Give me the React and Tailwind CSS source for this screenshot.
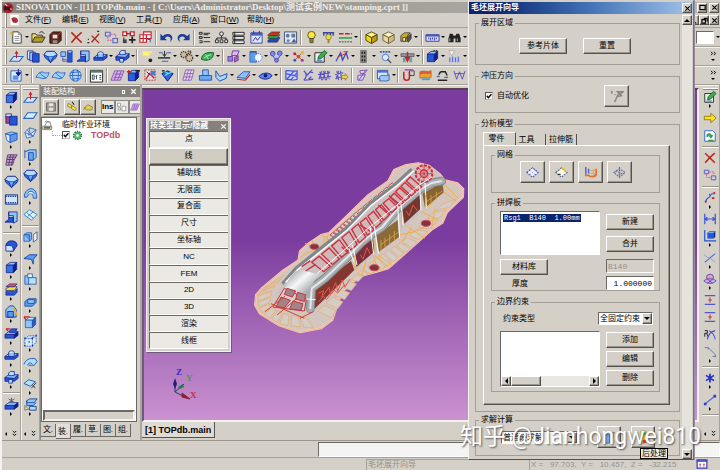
import React from "react";

const B = "#2456d6";
const L = "#8fc4fb";
const N = "#101c86";
const R = "#c8202c";
const K = "#222222";

const cube = (top, front, side, line) => (
  <g stroke={line} strokeWidth="0.8" strokeLinejoin="round">
    <path d="M2.5 5.5 6.5 2.5h7l-3.5 3z" fill={top} />
    <path d="M2.5 5.5H10v8H2.5z" fill={front} />
    <path d="M10 5.5l3.5-3v7.5L10 13.5z" fill={side} />
  </g>
);
const slab = (
  <g stroke={N} strokeWidth="0.7" strokeLinejoin="round">
    <path d="M1 9l4-3h10l-4 3z" fill={L} />
    <path d="M1 9h10v4H1z" fill={B} />
    <path d="M11 9l4-3v4l-4 3z" fill={N} />
  </g>
);
const mesh = (c) => <path d="M2 3c4-1 7 1 12 0v9c-4 2-8 0-12 0zM2 6l12 3M3 12l8-9M7 13l7-8" fill="#c8d0ff" stroke={c} strokeWidth="1.300" />;

const ART = {
  page: <g><path d="M4 2h6l3 3v9H4z" fill="#fff" stroke={K} strokeWidth=".9" /><path d="M10 2v3h3M6 7h5M6 9h5M6 11h5" stroke="#777" fill="none" strokeWidth=".8" /><path d="M3 1v5M.5 3.500h5M1.500 2l3 3" stroke="#d8b820" /></g>,
  folder: <g><path d="M1 13V4h4l1 1.500h6V8" fill="#f2dc6a" stroke={K} strokeWidth=".9" /><path d="M1 13l3-5.500h11L12 13z" fill="#b09a28" stroke={K} strokeWidth=".9" /><path d="M9 3c2-2 4-1 5 1" fill="none" stroke={K} /></g>,
  save: <g><path d="M2 5l3-3h9v9l-3 3H2z" fill="#5c2a1c" stroke="#1c0c08" strokeWidth=".9" /><path d="M5 5h5v4H5z" fill="#eadfd8" /><path d="M5 11h5v3H5z" fill="#9a8f88" /><path d="M11 5l3-3" stroke="#a0503c" /></g>,
  x: <path d="M2.500 2.500C6 6 10 10 13.500 13.500M13.500 2.500C9 6 6 9 2.500 13.500" stroke="#b3261c" strokeWidth="1.700" fill="none" />,
  xdot: <g><path d="M6 6l8 8M14 4L6 13" stroke="#b3261c" strokeWidth="1.500" /><path d="M1.500 13.500h2M2 10h1M12 1.500h2" stroke={K} strokeWidth="1.300" /></g>,
  boxes: <g fill="none" strokeWidth="1.100"><path d="M1.500 2.500h5v4h-5z" stroke="#5560c8" /><path d="M9.500 9h5v4.500h-5z" stroke="#5560c8" /><path d="M7 4.500h5.500V9M4 7v4h5" stroke="#d0508c" strokeDasharray="2 1" /></g>,
  group: <g><path d="M2 2h4v4H2zM10 2h4v4h-4z" fill="#fff" stroke={R} strokeWidth="1.400" /><path d="M6 4h4M3 8v5h3" stroke={K} fill="none" /><path d="M2 10h4v4H2z" fill="#444" /><path d="M12 7v7M8.500 10.500h7" stroke={K} strokeWidth="1.800" /></g>,
  group2: <g fill="#fff" stroke={R} strokeWidth="1.200"><path d="M6 2h8v7H6z" /><path d="M2 5h7v8H2z" /><path d="M2 9h7M5.500 5v8M9 5h5" /><path d="M10 10h3v3" stroke={B} /></g>,
  undo: <path d="M1.500 4v7h7L6.200 8.700C8 6 12.500 6.500 12.500 10c0 1-.5 2-1.500 3C16 11 15 4.500 9.500 4.300 7.500 4.200 5.500 5 4.200 6.600z" fill="#1c3a96" />,
  redo: <path d="M14.500 4v7h-7l2.300-2.300C8 6 3.500 6.500 3.500 10c0 1 .5 2 1.500 3C0 11 1 4.500 6.500 4.300c2-.1 4 .7 5.300 2.300z" fill="#1c3a96" />,
  tree: <path d="M2.500 2.500h3v2h-3zM2.500 7h3v2h-3zM2.500 11.500h3v2h-3M7 3.500h7M7 5h5M7 8h7M7 12.500h7" fill="none" stroke={K} strokeWidth="1" />,
  org: <g fill="#eee" stroke={K} strokeWidth="1"><path d="M8 6v3M3 11V8.500h10V11" fill="none" /><circle cx="8" cy="4" r="2" /><path d="M1.500 10.500h3v3h-3zM6.500 10.500h3v3h-3zM11.500 10.500h3v3h-3z" /></g>,
  list: <g><path d="M2 2.500h12v3H2zM2 7h12v3H2zM2 11.500h12v3H2z" fill="#eee" stroke={K} strokeWidth="1" /><path d="M4 2v12" stroke={K} /></g>,
  cal: <g><path d="M2 3h12v11H2z" fill="#dfe6ff" stroke="#3a48a0" /><path d="M2 3h12v3H2z" fill="#4a5cc0" /><path d="M4 12l3-4 2 3 3-4M5 1v3M11 1v3" stroke="#223080" fill="none" /></g>,
  layers: <g strokeWidth=".6" stroke="#333"><path d="M2 11l4-3h9l-3 5H2z" fill="#2444c0" /><path d="M2 8l4-3h9l-3 4H2z" fill="#28a040" /><path d="M2 5l4-3h9l-3 4H2z" fill="#c83020" /></g>,
  shapes: <g><path d="M1.500 2h13v12h-13z" fill="#dce8f4" stroke="#44506c" /><circle cx="5" cy="6" r="2" fill="#5878b8" /><path d="M9 4h4v4H9zM4 10h3v2.500H4z" fill="#68788c" /><path d="M12 9l-3 4h5z" fill="#3858a8" /></g>,
  bulb: <g><circle cx="8" cy="5.500" r="4" fill="#ffe83c" stroke="#5c5410" /><path d="M6.300 9h3.400v4.500H6.300z" fill="#8c8430" stroke="#333" strokeWidth=".7" /></g>,
  tag: <g><path d="M2 3h12M3 3v3M6.500 3v4M10 3v4M13 3v3" stroke="#3a48a0" strokeWidth="1.500" /><circle cx="8" cy="7.500" r="3" fill="#e8d84c" stroke="#77702a" strokeWidth=".7" /><path d="M7 10h2v4H7z" fill="#8c8430" /></g>,
  lines: <g strokeWidth="1.600"><path d="M1 4h14" stroke={R} strokeDasharray="5 1.500" /><path d="M1 8.500h14" stroke="#28a040" /><path d="M1 12.500h14" stroke="#777" strokeDasharray="2 1" /></g>,
  cubeY: <g stroke="#4c4400" strokeLinejoin="round"><path d="M8 2l6 3-6 3-6-3z" fill="#fff58c" /><path d="M2 5l6 3v6.500L2 11z" fill="#f0d820" /><path d="M14 5L8 8v6.500l6-3.500z" fill="#b89c10" /></g>,
  cubeW: <g stroke="#66582c" strokeLinejoin="round" strokeWidth=".9"><path d="M8 2l6 3-6 3-6-3z" fill="#fbf2cc" /><path d="M2 5l6 3v6.500L2 11z" fill="#e6d8a4" /><path d="M14 5L8 8v6.500l6-3.500z" fill="#cdbd86" /></g>,
  cubeG: <g stroke="#333" strokeWidth=".8"><path d="M3 6l4-3h6l-3 3v6H3z" fill="#c8ac28" /><path d="M9 8l5-4v5l-3 4z" fill="#555" /><path d="M5 8h3v4H5z" fill="#efe5a0" /></g>,
  ruler: <g><path d="M1 5h14v7H1z" fill="#dcdcff" stroke="#33409c" /><path d="M1 5h14v2H1z" fill="#4a58b8" /><path d="M4 8v2M6 8v3M8 8v2M10 8v3M12 8v2" stroke="#33409c" /></g>,
  binoc: <g fill={K}><path d="M3 4h3l1 3v6H1.500V9zM10 4h3l1.500 5v4H9V7z" /><path d="M6 6h4v3H6z" /><path d="M3 9v3M11 9v3" stroke="#bbb" /></g>,
  plane: <g><path d="M1 13l4-5h10l-4 5z" fill="#cfe6ff" stroke="#2c68c4" strokeWidth="1.200" /><path d="M8 10V3" stroke={R} strokeWidth="1.200" /><path d="M6 5h4L8 1.500z" fill={R} /></g>,
  sheet: <path d="M1 11l4-6h10l-4 6z" fill="#d8ecff" stroke="#2c68c4" strokeWidth="1.200" />,
  stack: <g stroke={N} strokeWidth=".8"><path d="M1.500 2h6v9h-6z" fill="#dce8ff" /><path d="M4 3.500h6v9H4z" fill={L} /><path d="M7 5h7v9H7z" fill={B} /></g>,
  gem: <g stroke={N} strokeWidth=".8" strokeLinejoin="round"><path d="M1 6l3-3.500h8L15 6l-1 3-6 5.500L2 9z" fill="#2f74e8" /><path d="M1 6l3-3.500h8L15 6l-4 2H5z" fill="#b4dcff" /><path d="M5 8l3 6.500L11 8" fill="#68a8f6" /></g>,
  cylset: <g stroke="#1c3ca8" strokeWidth=".8"><path d="M2 3h5v5H2z" fill={L} /><path d="M9 2h5v12H9z" fill={B} /><ellipse cx="11.500" cy="3" rx="2.500" ry="1.200" fill="#d0e8ff" /><path d="M4 9v4h5M4 11h4" fill="none" /></g>,
  bend: <g stroke={N} strokeWidth=".8"><path d="M5 2h9v10l-4 2V6H5z" fill={L} /><path d="M5 2v8l-4 3h9V8H5" fill={B} /></g>,
  cyl: <g stroke={N} strokeWidth=".8"><path d="M1 9l4-3h10l-4 4H1z" fill={L} /><path d="M1 9v3h10l4-3V6l-4 3.500z" fill={B} /><ellipse cx="8" cy="5" rx="3" ry="2" fill="#e0f0ff" /><path d="M5 5v4h6V5" fill={L} /></g>,
  cross: <g stroke={N} strokeWidth=".8"><path d="M1 8l4-3h10l-4 4H1z" fill={L} /><path d="M1 8v4h10l4-3V5l-4 4z" fill={B} /><path d="M5 3l2-1.500h4V6H5zM5 10h4v4H5z" fill="#b8dcff" /></g>,
  ydot: <g><path d="M2 2h12L8 9z" fill="#f2e68c" /><path d="M3 3h6v4H3z" fill="#fff46e" /><circle cx="11" cy="12" r="2" fill={K} /></g>,
  align: <g><path d="M1 9.500h13" stroke={K} strokeWidth="1.500" /><path d="M2 4h4M10 4h5M5 13h7" stroke="#5058b0" strokeWidth="1.200" /><path d="M8 2v5M6 5l2 3 2-3" stroke={K} fill="none" /></g>,
  gears: <g fill="#cdbb9c" stroke="#463e34" strokeDasharray="1.500 .8" strokeWidth="1.400"><circle cx="5" cy="6" r="3.200" /><circle cx="11" cy="9.500" r="3.600" /><circle cx="11" cy="3.500" r="1.500" /></g>,
  leaf: <g><path d="M1.500 11C2 5 7 3 14.500 4c0 6-5 10-13 7z" fill="#3fae5c" stroke="#12602a" /><path d="M4 10c3-3 5-3 8-4M6 6l3 5" stroke="#b5ecc0" fill="none" /></g>,
  purple: <g stroke="#5a3a9c" strokeWidth=".9"><path d="M7 2h7l-2 5H6z" fill="#e2b4ea" /><path d="M2 8h5v5H2z" fill="#9a7ae0" /><path d="M9 9l4-2v5l-4 2z" fill="#d6589c" /></g>,
  half: <g stroke="#2c5cb8" strokeWidth=".8"><path d="M2 3h7v11H2z" fill="#5c9cf0" /><path d="M2 3h7" stroke="#133" /><circle cx="11" cy="9" r="4" fill="#f4f8ff" strokeDasharray="1.500 1" /></g>,
  balls: <g fill="#8088e8" stroke="#3c3c9c" strokeWidth=".9"><circle cx="4" cy="5" r="2.500" /><circle cx="11.500" cy="4.500" r="2.500" /><path d="M4 7l4 6 4-6" fill="#b8c0ff" /><circle cx="8" cy="12" r="2" /></g>,
  sparks: <g><path d="M3 4l9 8M13 3L4 12" stroke="#9a6a50" /><g><circle cx="4" cy="5" r="1.600" fill={R} /><circle cx="12" cy="4" r="1.600" fill="#e8b020" /><circle cx="8" cy="8" r="2" fill="#d84820" /><circle cx="4" cy="12" r="1.500" fill="#3458c8" /><circle cx="12" cy="12" r="1.600" fill="#a038a8" /></g></g>,
  pencil: <g><path d="M2 4h10v10H2z" fill="#eef5ea" stroke={K} /><path d="M5 11l1-3.500 6-6 3 2.500-6.500 6.500z" fill="#38b04c" stroke="#12501e" strokeWidth=".8" /><path d="M4 12.500h6" stroke={B} /></g>,
  arcs: <g fill="none"><path d="M1 13L6 4l2 8 4-8 2 7" stroke="#3848c0" strokeWidth="1.300" /><path d="M9 3h5M3 8l9-3" stroke={R} /></g>,
  dots: <g><path d="M5 1.500h6v13H5z" fill="#8c8c8c" stroke="#555" strokeWidth=".6" /><path d="M6 3h1.500v2H6zM8.500 3H10v2H8.500zM6 7h1.500v2H6zM8.500 7H10v2H8.500zM6 11h1.500v2H6zM8.500 11H10v2H8.500z" fill={K} /></g>,
  fxy: <g><path d="M2 3h12" stroke="#4450a8" strokeWidth="2" strokeDasharray="2 1" /><circle cx="8" cy="9" r="3.500" fill="#dfeaff" stroke="#4c78c8" /><path d="M10 11l4 4" stroke="#555" strokeWidth="1.500" /></g>,
  press: <g><path d="M1 5h14v3H1z" fill="#8a96a8" stroke="#444" strokeWidth=".7" /><path d="M3 9h3v5H3zM10 9h3v5h-3z" fill="#68a4a0" /><path d="M8 3v8M6 9l2 4 2-4z" stroke={R} fill={R} strokeWidth="1.500" /></g>,
  bluecube: <g>{cube(L, B, N, N)}<path d="M9 1.500h5" stroke={K} strokeDasharray="1.500 1" /></g>,
  bars: <g><path d="M2 2h6l-3 5z" fill="#fff" stroke="#999" strokeWidth=".7" /><path d="M2 9h12v5H2z" fill="#b8c4f4" /><path d="M3 9v5M6 8v6M9 9v5M12 8v6" stroke="#5064c8" /></g>,
  importer: <g><path d="M2 3h11v11H2z" fill="#dceaff" stroke="#2c68c4" /><path d="M4 8h6v4.500H4z" fill="#5c94e0" /><path d="M10 1v5M7.500 5l2.500 3.500L12.500 5z" fill={N} stroke={N} /></g>,
  surf: <path d="M1 10C3 5 7 3 10 5c2 1 3 0 5 0-1 5-4 7-8 6-3-1-4-1-6-1zM5 5c1 2 3 3 7 6" fill="#9ccffc" stroke="#2c68c4" strokeWidth="1" />,
  globe: <g fill="none" stroke="#2c68c4"><ellipse cx="8" cy="8" rx="6" ry="6" fill="#b4d8fb" /><path d="M3 5l10-1M2 8h12M4 12l8-1M6 2c-2 4-1 8 0 12M10 2c2 4 1 8 0 12" /></g>,
  date: <g><path d="M1.500 2.500h13v12.500h-13z" fill="#fff" stroke={K} /><path d="M1.500 2.500h13v2.500h-13z" fill="#557a74" /><path d="M3.500 7.500v4.500h2v-4.500zM8 8v4M7 9l2-1M11 8h2M11 10h2M11 12h2" stroke="#3a4a4a" fill="none" /></g>,
  para: <path d="M1 13L5 3h10l-4 10zM4 10h8M5 6.500h8M8 3L4.500 13M12 3L8 13" fill="#d4b0ee" stroke="#8450b0" strokeWidth=".9" />,
  cubered: <g>{cube(L, "#2464e0", N, N)}<path d="M1 4h5M3 2v4" stroke={R} strokeWidth="1.400" /><path d="M10 3h5" stroke={K} strokeWidth="1.500" /></g>,
  redmix: <g><path d="M2 2h11v11H2z" fill="#e6dada" stroke="#9a4a4a" strokeDasharray="2 1" /><path d="M3 12L7 6l5 5" stroke={R} fill="none" strokeWidth="1.400" /><path d="M8 3h5v5H8z" fill="#5878c8" /><path d="M4 4l3 3" stroke={K} /></g>,
  diam: <g><path d="M2 6l6-3 6 3-6 8z" fill="#2c68e0" stroke={N} /><path d="M3 3l6 3M5 8l8-4" stroke="#5ce0e8" strokeWidth="1.300" /><path d="M2 3h3" stroke={K} strokeWidth="1.400" /></g>,
  net: <path d="M5 2h9l-3 11H2zM4 6h9M3 9.500h9M8 2L5 13M11 2L8 13" fill="#f2d4ee" stroke="#7a5cb4" strokeWidth=".9" />,
  ortho: <g stroke="#1c4cb0" strokeWidth=".9"><path d="M5 2h6v6H5z" fill={L} /><path d="M1.500 8h13v5h-13z" fill="#68a8f4" /></g>,
  wedge: <path d="M2 3l4 6 8-3-1 5-7 3-4-4z" fill="#a8d8fc" stroke="#2050b8" strokeWidth="1" />,
  wing: <g><path d="M1 10l7-6h7l-5 7z" fill="#8cc0fa" stroke="#2c58b8" /><path d="M1 12l9 1 5-6" fill="none" stroke={R} strokeWidth="1.200" /></g>,
  eye: <g><path d="M1 9c3-4 10-5 14-1-3 5-10 5-14 1z" fill="#5c8cf0" stroke={N} /><circle cx="8" cy="8" r="2" fill={N} /></g>,
  mesh1: mesh("#4858d8"),
  hook: <path d="M3 3c4 3 3 7 0 10M3 13l10-1M6 8l6-6M9 4l4 1M8 12l3-3" stroke="#5450c8" strokeWidth="1.400" fill="none" />,
  hash: <path d="M3 4l2 9M7 3l2 10M11 3l2 9M1 7l13-2M2 11l13-2M5 3L2 12M9 3l-3 10M13 3l-3 10" stroke="#5450c8" strokeWidth="1.100" fill="none" />,
  hasharrow: <g><path d="M3 3l2 10M7 3l1 10M1 7l9-2M2 11l8-2M5 3L2 12" stroke="#5450c8" strokeWidth="1.100" fill="none" /><path d="M8 8h4V6l3 3.500L12 13v-2H8z" fill="#f0d44c" stroke="#7a6a10" strokeWidth=".7" /></g>,
  folds: <path d="M5 3c4-1 5 0 8-1l-3 4H6zM3 8c3-1 5 0 8-1l-3 6H3zM4 13l7-10" fill="#dcccf6" stroke="#7450b4" strokeWidth="1" />,
  wins: <g><path d="M1.500 2.500h11v9h-11z" fill="#dce6ff" stroke="#3050a0" /><path d="M1.500 2.500h11v2.500h-11z" fill="#4c74d0" /><path d="M4 9c3-3 6 1 10-2v6c-4 2-7 0-10 1z" fill="#9cc8f8" stroke="#2050a0" strokeWidth=".8" /></g>,
  magnet: <g fill="none" strokeWidth="1.600"><path d="M3 4v6c0 4 6 4 6 0V4" stroke={R} /><path d="M9 3h5v5H9z" stroke="#444" strokeWidth="1" /><path d="M4 2h9" stroke="#a050b0" /></g>,
  flag: <g><path d="M2 4c4-2 8 1 12-1v7c-4 2-8-1-12 1z" fill="#f0a030" stroke="#a86418" strokeWidth=".7" /><path d="M2 4c4-2 8 1 12-1v3c-4 1-8-1-12 1z" fill="#e0583c" /><path d="M4 12h9" stroke="#4ca0d0" strokeWidth="2" /></g>,
  robot: <g fill="none" stroke={K} strokeWidth="1.500"><path d="M3 13h10M6 4h5l2 4M6 4L4 7" /><path d="M2 9h3M10 10h4" stroke="#3c68c0" /></g>,
  vee: <path d="M2 3l3 9 3-8 3 8 3-9M3 6h10" stroke="#6450b8" fill="none" />,
  cubeB: cube(L, "#3472e8", N, N),
  docs: <g stroke={N} strokeWidth=".8"><path d="M2 2h6v4H2z" fill="#e8e0f0" /><path d="M2 5h5v7H2z" fill="#a04880" /><path d="M6 4.500h8V14H6z" fill={B} /></g>,
  cubeL: <g stroke="#2050a8" strokeWidth=".8"><path d="M1.500 4l5 1.500v8L3 11z" fill="#dcecff" /><path d="M1.500 4L8 2l6 1.500-7.500 2z" fill={L} /><path d="M6.500 5.500l7.500-2v7l-7.500 3z" fill="#5c98f0" /></g>,
  hatch: <path d="M4 3h10l-3 5H3zM3 8h8l-2 6H2zM7 3L5 14M10 3L8 14M4 5.500h9M3 11h7" fill="#c8a8cc" stroke="#5c3c78" strokeWidth="1" />,
  film: <g><path d="M1.500 3h13v10h-13z" fill="#cfe4ff" stroke="#1c3c80" /><path d="M1.500 4.500h13M1.500 11.500h13" stroke="#1c3c80" strokeWidth="1.600" strokeDasharray="1.500 1" /></g>,
  round: <g stroke={N} strokeWidth=".8"><path d="M2 8c0-3 3-5 6-5 4 0 6 2 6 5l-4 6H6z" fill={B} /><path d="M2 8h4c3 0 4 2 4 6H2z" fill="#cfe4ff" /></g>,
  sandwich: <g stroke={N} strokeWidth=".7"><path d="M2 10h9l3-3v4l-3 3H2z" fill={B} /><path d="M2 7l4-2h8l-3 4H2z" fill="#f4e040" /><path d="M2 5l4-3h8l-3 3z" fill="#e05858" /></g>,
  chamf: <g stroke={N} strokeWidth=".8"><path d="M2 6l4-4h4l3 4v8H2z" fill={L} /><path d="M4 8h6v6H4z" fill="#5c98ec" /><path d="M10 4l4 8" stroke="#d8b830" strokeWidth="2" /></g>,
  slabR: <g>{slab}<path d="M2 3h5M2 3l3 3" stroke={R} strokeWidth="1.300" /><path d="M6 5l2-2h6l-2 4H6z" fill={B} stroke={N} strokeWidth=".7" /></g>,
  slabX: <g>{slab}<path d="M5 2l6 4M11 2L5 6M8 1v5" stroke="#555" /></g>,
  fan: <path d="M2 8l5-5 7 2-3 7-7 2zM7 3l-1 8 8-6M2 8l9 4M4 5l7 7" fill="#dcecff" stroke="#2c68c4" strokeWidth=".9" />,
  door: <g stroke="#1c4ca0" strokeWidth=".9"><path d="M2 3v9M2 5l5-2h7v8l-3 3H6V6" fill={L} /><path d="M6 6h5v8H6z" fill="#68a4f0" /></g>,
  arch: <g stroke="#1c4cb0" strokeWidth=".9"><path d="M1.500 12C1 6 6 2 10 3c3 1 5 5 4.500 10H11c0-5-3-6-5-4L4 12z" fill="#8cc4fb" /><path d="M5 8c1-3 5-3 7 0" fill="#e4f2ff" /></g>,
  diamondL: <path d="M1 8l6-5 8 5-6 6zM4 6l7 6M5 10l6-5" fill="#e2f2ff" stroke="#2c80c4" />,
  mirror: <g stroke="#1c4ca0" strokeWidth=".8"><path d="M1 6l3-2h5v7l-2 2H1z" fill={L} /><path d="M1 6h6v7" fill="#5c98ec" /><path d="M11 6l4-3v8l-4 3z" fill="#eee" /></g>,
  blade: <path d="M1 8l6-4h8l-4 5v5l-2-5z" fill="#5c9cf0" stroke="#1c4ca0" />,
  cup: <g stroke="#1c4ca0" strokeWidth=".8"><path d="M2 4h5v9H2z" fill={L} /><path d="M6 6h8v7H6z" fill="#b8e0ff" /><path d="M5 2h5v4H5z" fill="#e8f4ff" /></g>,
  disc: <g stroke="#1c4ca0" strokeWidth=".9"><path d="M2 8l4-3h8v4l-4 4H2z" fill="#5c9cf0" /><path d="M5 6h7v4H5z" fill={L} /></g>,
  pull: <g>{cube("#cfe8ff", L, B, "#2050a8")}<path d="M1 2h6M1 2l2 3" stroke={R} strokeWidth="1.300" fill="none" /></g>,
  net2: <g><path d="M2 6l4-3h8v7l-4 4H2zM2 6h8l4-3M10 6v8" fill="#d8ecff" stroke="#2c68c4" strokeDasharray="2 1" /><path d="M1.500 5.500h1M9.500 5.500h1M13.500 2.500h1M1.500 13.500h1M9.500 13.500h1M6 9.500h1" stroke={N} strokeWidth="2" /></g>,
  hood: <path d="M1 11c2-5 6-7 12-6l2 3-3 4H6M5 12c0-3 4-3 5-1" fill="#b4dcfb" stroke="#1c5cb4" />,
  trim: <g><path d="M1 8l5-4 7 2-5 5z" fill="#b4e0fb" stroke="#1c5cb4" /><path d="M9 13l5-6M13 13l-3-4" stroke="#333" /></g>,
  paint: <g><path d="M4 4l3-2h8l-3 4H4zM4 4v5h7l3-3" fill={L} stroke="#1c4ca0" /><path d="M2 9l4 4-4 1z" fill="#f5efc0" stroke="#555" strokeWidth=".8" /><path d="M7 10h7v4H7z" fill="#b4dcfb" stroke="#1c4ca0" /></g>,
  arrow: <path d="M1.500 6H9V2.500L15 8l-6 5.500V10H1.500z" fill="#ffe21c" stroke="#8a7a10" />,
  refresh: <g><path d="M2 2h9l3 3v9H2z" fill="#fff" stroke={B} /><path d="M4 9V7c1-3 5-3 6 0h2l-3 4-3-4h2C7 6 6 7 6 9z" fill="#2c9c4c" /><path d="M6 13h6" stroke="#2c9c4c" strokeWidth="1.500" /></g>,
  curve: <g fill="none" stroke="#4458d0" strokeWidth="1.400"><path d="M3 13C4 6 7 9 8 6s2-3 5-3" /><path d="M2 12h2M12 2h2M10 8h3M7 4h1" stroke={R} strokeWidth="2" /></g>,
  width: <path d="M2 2v12M14 2v12M3 8h10M5 6L3 8l2 2M11 6l2 2-2 2" stroke="#3c54d8" strokeWidth="1.400" fill="none" />,
  corner: <g><path d="M2 1v12.500h13" stroke={B} strokeWidth="1.400" fill="none" /><path d="M5 5l2-2h7l-2 2z" fill={L} stroke={N} strokeWidth=".7" /><path d="M5 5h7v6H5z" fill={B} /><path d="M12 5l2-2v6l-2 2z" fill={N} /></g>,
  split: <g fill="none"><path d="M2 13L14 3" stroke="#4c68d0" strokeWidth="1.200" /><path d="M1 4l4 3 3 1 6 5" stroke="#88a0d8" /></g>,
  roll: <g fill="none" stroke="#6444a4"><ellipse cx="8" cy="6" rx="4" ry="3.500" fill="#e0a0c0" /><path d="M1 10c4-3 10-3 14 0-4 4-10 4-14 0zM5 8l6 5M11 8l-6 5" fill="#c0b0f0" /></g>,
  par: <g><path d="M2 3h12M2 13h12" stroke="#4c5cd0" strokeWidth="1.200" /><path d="M8 5v6M6 8h4" stroke={R} /></g>,
  rad: <g fill="none"><path d="M2 3h3v3H2v4M4 6l2 4" stroke={K} strokeWidth="1.100" /><path d="M5 13C6 7 9 4 14 3M7 3c4 2 6 5 7 10" stroke="#3c54d8" strokeWidth="1.200" /></g>,
  chline: <path d="M2 3h4l8 8v3M6 3v2M11 13h4" stroke="#5c6cb8" fill="none" />,
  star: <path d="M8 3v10M3.500 5l9 6M12.500 5l-9 6" stroke="#2430c8" strokeWidth="2" />,
  seg: <g><path d="M3 12L13 4" stroke="#5c70d8" strokeWidth="1.500" /><path d="M1 11h3v3H1zM12 2h3v3h-3z" fill="#2c3cc8" /></g>,
  quad: <g fill="none" stroke="#4c62c8" strokeWidth="1.300"><path d="M2 8l6-5 6 5-6 5z" fill="#f8f8ff" strokeDasharray="2 1" /><path d="M5 5.500l6 5M11 5.500l-6 5" strokeDasharray="1 2" strokeWidth="1" /></g>,
  quadY: <g fill="none" stroke="#5c6494" strokeWidth="1.200"><path d="M2 8l6-5 6 5-6 5z" fill="#fafae8" strokeDasharray="2 1" /><path d="M9 3l4 4" stroke="#e8c020" strokeWidth="2" /><path d="M4 10h3" stroke={K} /></g>,
  tub: <g fill="none" strokeWidth="1.500"><path d="M3 2v8M6 4v5" stroke="#4464d0" /><path d="M2 11h4c1 2 7 2 8-1V4" stroke="#e07030" strokeWidth="2" /><path d="M8 6h6M8 9h6M11 4v8" stroke="#e8a050" strokeWidth="1" /></g>,
  quadZ: <g fill="none" stroke="#5c6aac" strokeWidth="1.200"><path d="M2 8l6-4 6 4-6 5zM8 2v12M4 6l8 4" strokeDasharray="2 1" /><path d="M8 8v5" stroke="#a08040" strokeWidth="1.500" /></g>,
  wand: <g stroke="#8a867e" fill="none" strokeWidth="1.500"><path d="M6 14l4-9M9 8l5-1M9 3h6l-3 3z" fill="#aaa69e" /><path d="M2 3h2M3 2v3M6 6h1" /></g>,
  solve: <g><path d="M2 5h6v9H2z" fill="#7ca8e8" stroke="#4070b0" /><path d="M10 3h4M12 2v6" stroke="#777" /></g>,
  lights: <g><path d="M5 1h6v13H5z" fill="#e8e480" stroke="#8a8650" strokeWidth=".6" /><circle cx="9" cy="4" r="2" fill="#38b848" /><circle cx="8" cy="8" r="2" fill="#e8c828" /><circle cx="9" cy="12" r="2" fill="#d83828" /></g>,
  disk: <g><path d="M2 2.500h12v11H2z" fill="#99958d" stroke="#66625c" /><path d="M5 3h6v4H5zM5 9h6v4H5z" fill="#e8e5df" /></g>,
  link: <g stroke="#6c6218" strokeWidth=".8" fill="#f0e040"><path d="M3 3l5 3-1 3-5-2z" /><path d="M8 6l6 4-2 3-5-3z" /><path d="M8 1l3 4" stroke={K} strokeWidth="1.500" /></g>,
  link2: <g stroke="#6c6218" strokeWidth=".8" fill="#e8d038"><path d="M3 9l5-4 6 3-1 4H6z" /><path d="M2 12l3-4" /></g>,
  outl: <g fill="#fff" stroke="#888"><path d="M2 3h4v4H2zM8 7h5v6H8zM3 9h3v3H3z" /></g>,
  cog: <g><circle cx="8" cy="8" r="5" fill="#5cb878" stroke="#2c7c44" strokeWidth="3.500" strokeDasharray="1.900 1.240" /><circle cx="8" cy="8" r="4.500" fill="#5cb878" /><circle cx="8" cy="8" r="2" fill="#fff" /></g>,
  home: <g stroke="#555" strokeWidth=".9"><path d="M1 9h13v5H1z" fill="#dcd8a0" /><path d="M4 9l3-6h5l1 6z" fill="#fff" /><path d="M4 3l3-1.500 4 1.500" fill="none" /><path d="M3 11.500h9" stroke={K} strokeWidth="1.500" /></g>,
  app: <g><circle cx="8" cy="8" r="7" fill="#a8242c" /><path d="M3 5l5 2 5-3-3 5 2 4-5-3-4 2z" fill="#331418" /><path d="M4 3l3 2M11 9l2 1" stroke="#f0c8c8" strokeWidth="1.500" /></g>,
  doc: <g><path d="M2 1h11v14H2z" fill="#fff" /><path d="M3 6c3-3 8-2 9 2s-4 5-7 3z" fill="#b83040" /><path d="M4 7l5 3" stroke="#334" /></g>,
  table: <g><path d="M1.500 2.500h13v11h-13z" fill="#fff" stroke="#2c3cc0" strokeWidth="1.600" /><path d="M1 4h14" stroke="#2c3cc0" strokeWidth="2" /><path d="M4 9h3M9 9h3M5.500 7v5M10.500 7v5" stroke="#c83c78" /></g>,
};

function Icon({ n, className = "size-[15px]" }) {
  return (
    <svg viewBox="0 0 16 16" className={className + " shrink-0"} aria-hidden="true">
      {ART[n]}
    </svg>
  );
}

const raised = "border border-t-white border-l-white border-r-[#55524d] border-b-[#55524d] bg-[#d4d0c8] shadow-[inset_-1px_-1px_0_#9a968e]";
const sunken = "border border-t-[#6c6964] border-l-[#6c6964] border-r-white border-b-white";

/* A trailing ">" marks a tool with a drop-down; "|" is a divider. */
const ROW1 = "page> folder save | x xdot boxes group group2 | undo redo | tree org list cal layers shapes | bulb tag lines> | cubeY cubeW cubeG> | ruler> binoc>".split(" ");
const ROW2 = "plane stack gem cylset bend cyl> cross> | ydot align> gears> leaf> | purple> half> balls> sparks> pencil> arcs> dots> fxy> press> | bluecube> bars>".split(" ");
const ROW3 = "importer> | surf surf globe | date | para cubered redmix diam | net ortho wedge> wing> eye> | mesh1 hook hash hasharrow | folds | wins> | magnet flag robot vee".split(" ");
const COL1 = "cubeB> docs cubeL> hatch> gem film bend> | round> cubeB> sandwich> chamf> slabR> cyl> cross> | slabX>".split(" ");
const COL2 = "plane sheet fan> door> gem arch> diamondL | mirror> blade> cup> disc> pull net2> hood> trim> paint>".split(" ");
const COL3 = "pencil> arrow refresh | x boxes | curve> width corner> split> roll> par par rad chline> | star> seg> |".split(" ");

function Grip() {
  return <span className="h-[15px] w-[2px] shrink-0 border-l border-white bg-[#8c8982]" />;
}

function ToolRow({ items, children }) {
  return (
    <div className="flex h-[19px] items-center justify-between border-b border-[#a5a199] shadow-[0_1px_0_#f4f2ee]">
      <div className="flex w-[465px] items-center gap-[2px] pl-[3px]">
        <Grip />
        <div className="flex flex-1 items-center justify-between">
          {items.map((t, i) =>
            t === "|" ? (
              <span key={i} className="h-[15px] w-[2px] border-r border-white bg-[#9a968e]" />
            ) : (
              <button key={i} type="button" aria-label={t.replace(">", "")} className="flex items-center">
                <Icon n={t.replace(">", "")} />
                {t.endsWith(">") && <span className="ml-px border-x-2 border-t-2 border-x-transparent border-t-black" />}
              </button>
            )
          )}
        </div>
      </div>
      {children}
    </div>
  );
}

function ToolColumn({ items }) {
  return (
    <div className="flex w-[19px] shrink-0 flex-col items-center border-r border-[#a5a199] shadow-[1px_0_0_#f4f2ee]">
      <span className="mt-[3px] h-[2px] w-[15px] border-t border-white bg-[#8c8982]" />
      <div className="flex h-[326px] flex-col items-center justify-between">
        {items.map((t, i) =>
          t === "|" ? (
            <span key={i} className="h-[2px] w-[17px] border-b border-white bg-[#9a968e]" />
          ) : (
            <button key={i} type="button" aria-label={t.replace(">", "")} className="flex flex-col items-center">
              <Icon n={t.replace(">", "")} className={items === COL3 ? "size-[14px]" : "size-[15px]"} />
              {t.endsWith(">") && <span className="border-y-2 border-l-2 border-y-transparent border-l-black" />}
            </button>
          )
        )}
      </div>
      <div className="mt-auto mb-[3px] flex items-center gap-[5px]">
        <span className="border-y-2 border-r-2 border-y-transparent border-r-black" />
        <svg viewBox="0 0 6 8" className="h-[7px] w-[5px]" aria-hidden="true">
          <path d="M1 1l2 2 2-2M1 4.500l2 2 2-2" fill="none" stroke="#000" strokeWidth="1.200" />
        </svg>
      </div>
    </div>
  );
}

function Overflow() {
  return (
    <div className="flex w-[14px] flex-col items-center gap-[3px]">
      <svg viewBox="0 0 8 6" className="h-[5px] w-[7px]" aria-hidden="true">
        <path d="M1 1l2 2-2 2M4.500 1l2 2-2 2" fill="none" stroke="#000" strokeWidth="1.200" />
      </svg>
      <span className="border-x-2 border-t-2 border-x-transparent border-t-black" />
    </div>
  );
}

function Btn({ children, className = "" }) {
  return (
    <button type="button" className={`${raised} flex h-[16px] w-[48px] items-center justify-center text-[8px] ${className}`}>
      {children}
    </button>
  );
}

function Glyph({ d, label }) {
  return (
    <button type="button" aria-label={label} className={`${raised} flex size-[10px] items-center justify-center`}>
      <svg viewBox="0 0 8 8" className="size-[7px]" aria-hidden="true">
        <path d={d} fill="none" stroke="#000" strokeWidth="1.300" />
      </svg>
    </button>
  );
}

function Group({ title, className = "", children }) {
  return (
    <fieldset className={`min-w-0 border border-[#a39f97] ${className}`}>
      <legend className="ml-[3px] px-[2px] text-[8px] leading-[10px]">{title}</legend>
      {children}
    </fieldset>
  );
}

function Drop({ label, options, className }) {
  return (
    <div className={`${sunken} flex h-[13px] bg-white ${className}`}>
      <select aria-label={label} className="min-w-0 flex-1 appearance-none bg-transparent pl-px text-[8px] leading-[11px] outline-none">
        {options.map((o) => (
          <option key={o}>{o}</option>
        ))}
      </select>
      <span className={`${raised} pointer-events-none flex w-[10px] items-center justify-center`}>
        <span className="border-x-[3px] border-t-[3px] border-x-transparent border-t-black" />
      </span>
    </div>
  );
}

const lerp = (a, b, t) => [a[0] + (b[0] - a[0]) * t, a[1] + (b[1] - a[1]) * t];
const quad = (a, b, c, d) => `M${a}L${b}L${c}L${d}Z`;

/* Cells between two polylines that run side by side. */
function cells(p, q, n) {
  const at = (line, t) => {
    const s = t * (line.length - 1);
    const i = Math.min(Math.floor(s), line.length - 2);
    return lerp(line[i], line[i + 1], s - i);
  };
  return Array.from({ length: n }, (_, i) => [at(p, i / n), at(p, (i + 0.75) / n), at(q, (i + 0.75) / n), at(q, i / n)]);
}

const FLANGE = "M447 45L480 31 520 25 552 32 585 58 600 76 638 85 655 102 654 126 606 172 592 204 560 224 498 280 430 340 395 350 345 364 290 412 272 465 262 495 228 520 165 532 100 510 45 476 30 450 33 420 52 398 115 346 160 316 165 288 192 264 228 240 252 234 300 188 370 120 430 78Z";

function Model() {
  const redTop = cells([[200, 322], [330, 215], [430, 132], [500, 62]], [[236, 350], [352, 256], [456, 158], [535, 92]], 13);
  const backFlange = cells([[255, 240], [330, 175], [446, 80]], [[275, 250], [345, 190], [458, 96]], 15);
  const frontFlange = cells([[218, 468], [330, 362], [400, 305], [480, 255], [600, 140]], [[258, 488], [350, 366], [425, 335], [510, 270], [640, 125]], 18);
  const noseFlange = cells([[118, 360], [80, 405], [72, 455], [120, 478], [190, 490]], [[60, 395], [36, 420], [45, 470], [110, 510], [215, 520]], 11);
  const rib = "M196 462L200 400 240 370 318 296 350 262 385 234 412 216 458 160 524 104 560 84 590 78";
  return (
    <svg viewBox="0 0 675 555" className="absolute top-[65px] left-[101px] h-[185px] w-[225px]" aria-label="冲压件模型" role="img">
      <defs>
        <linearGradient id="hood" x1="0" y1="0" x2="1" y2="1">
          <stop offset="0" stopColor="#858a8c" />
          <stop offset=".4" stopColor="#f6f8f8" />
          <stop offset=".7" stopColor="#a4a8aa" />
          <stop offset="1" stopColor="#c9cdcd" />
        </linearGradient>
      </defs>
      <path d={FLANGE} fill="#d5c5bf" stroke="#f6cfc8" strokeWidth="6" strokeLinejoin="round" />
      <path d={FLANGE} fill="none" stroke="#eda763" strokeWidth="2" />
      <g fill="#d3cdc6" stroke="#e8aa66" strokeWidth="2">
        {[...frontFlange, ...noseFlange].map((c, i) => <path key={i} d={quad(...c)} />)}
      </g>
      <g fill="#dccfca" stroke="#c8504e" strokeWidth="3">
        {backFlange.map((c, i) => <path key={i} d={quad(...c)} />)}
      </g>
      <g fill="none" stroke="#f0b04c" strokeWidth="3">
        <path d="M165 310C190 280 220 300 240 250M180 265l60 30M200 255l20 45M230 240l40 25M250 235l-10 50" />
        <path d="M330 345l50-50 50 40M350 360l20-60M400 345l-20-55M440 330l-40-30M460 240l50-10 40-20M470 260l30-40M480 210l60 40M520 165l60 30M545 160l50-50 40 30M560 220l10-60M600 90l40 40" />
      </g>
      <path d="M86 450L110 388 150 340 210 290 300 222 370 150 450 90 500 42 540 28 575 50 598 80 596 116 540 160 478 212 455 250 395 296 335 338 290 385 205 470 178 468Z" fill="#c8c2c2" />
      <path d="M112 386L152 340 214 290 300 222 318 206 372 148 450 88 500 42" fill="none" stroke="#80868a" strokeWidth="9" />
      <path d="M122 382L160 342 222 294 306 226 378 152 456 92 506 48" fill="none" stroke="#fff" strokeWidth="4" />
      <path d="M208 402L318 318 328 345 208 462Z" fill="#85372f" />
      <path d="M328 292L384 246 388 290 334 336Z" fill="#792f3c" />
      <path d="M394 242L458 195 462 246 402 290Z" fill="#8b6a37" />
      <path d="M472 160L524 112 526 162 478 206Z" fill="#74362f" />
      <path d="M532 116L592 82 596 112 540 158Z" fill="#866330" />
      <path d={rib} fill="none" stroke="#81888a" strokeWidth="26" strokeLinejoin="round" strokeLinecap="round" />
      <path d={rib} fill="none" stroke="#a9aeb0" strokeWidth="20" strokeLinejoin="round" strokeLinecap="round" />
      <path d={rib} fill="none" stroke="#e4e7e7" strokeWidth="6" strokeLinejoin="round" />
      <g stroke="#e2574a" strokeWidth="3" fill="none">
        <path d="M220 415l16-8-6 20 22-30 4 20 16-34 6 26 14-34 8 22 14-24M220 440l16-16 8 10 24-28 10 8 22-26M346 300l8 12 12-34 10 20M484 168l8 14 12-32 14 18" />
      </g>
      <g stroke="#d29a44" strokeWidth="3" fill="none">
        <path d="M408 256v30M420 248v30M434 238v30M448 228v28M406 270l54-38M544 130v24M558 120v28M574 110v22M544 140l48-32" />
      </g>
      <path d="M124 392C132 366 146 346 168 344L226 360C210 372 196 392 194 420L184 436 120 398Z" fill="url(#hood)" />
      <path d="M118 400L184 432 178 468 84 456Z" fill="#d8cccc" stroke="#c8323c" strokeWidth="3" />
      <path d="M126 400l26 8-10 18-24-8zM158 412l24 8-4 20-26-8zM108 426l28 10-18 22-24-4zM144 438l30 8-6 20-34-4z" fill="#a08488" stroke="#c8323c" strokeWidth="3" />
      <path d="M60 470l60-46M96 480l60-50M78 446l100 44M205 470l-40 20" stroke="#d4442c" strokeWidth="3" />
      <g fill="#d0b8b8" stroke="#d02c3c" strokeWidth="4">
        {redTop.map((c, i) => <path key={i} d={quad(...c)} />)}
      </g>
      <path d="M170 335l26-18M182 348l30-20M290 275l20 20M345 210l36 22M400 150l30 28M432 122l30 24" stroke="#d02c3c" strokeWidth="4" fill="none" />
      <circle cx="537" cy="56" r="25" fill="#d8b4b4" stroke="#d02c3c" strokeWidth="6" strokeDasharray="9 4" />
      <circle cx="537" cy="56" r="11" fill="none" stroke="#d02c3c" strokeWidth="4" />
      <path d="M512 56h50M537 31v50M520 38l34 36M554 38l-34 36" stroke="#d02c3c" strokeWidth="2" />
      <g stroke="#fff" strokeWidth="3" fill="none">
        <path d="M216 356L306 278 372 218 456 150 520 92 560 66M312 280l18 50M322 270l14 60M376 218l10 80M388 212l12 84M458 150l6 100M468 146l6 66M524 94l4 72M540 84l4 76M184 432l28 2" />
      </g>
      <path d="M330 340v-40M390 294v-40M470 214v-46M542 160v-40" stroke="#f1ae40" strokeWidth="3" />
      <g fill="#8c3040" stroke="#c05060" strokeWidth="3">
        <ellipse cx="208" cy="275" rx="13" ry="8" />
        <ellipse cx="388" cy="338" rx="14" ry="9" />
        <ellipse cx="543" cy="205" rx="14" ry="9" />
      </g>
    </svg>
  );
}

const TYPES = ["点", "线", "辅助线", "无限面", "复合面", "尺寸", "坐标轴", "NC", "FEM", "2D", "3D", "渲染", "线框"];
const MENUS = [["文件", "F"], ["编辑", "E"], ["视图", "V"], ["工具", "T"], ["应用", "A"], ["窗口", "W"], ["帮助", "H"]];
const CROSS = "M1.500 1.500l5 5M6.500 1.500l-5 5";

function Palette() {
  return (
    <section className="absolute top-[28px] left-[2px] flex w-[85px] flex-col border border-[#f4eef8] bg-[#d4d0c8] p-[2px] shadow-[1px_1px_0_#6c5a78]">
      <header className="flex h-[10px] items-center justify-between bg-[#85817c] px-px text-[8px] leading-[10px] font-bold text-white">
        <span>按类型显示/隐藏</span>
        <button type="button" aria-label="关闭" className="w-[7px]">
          <svg viewBox="0 0 8 8" className="size-[7px]"><path d={CROSS} stroke="#fff" strokeWidth="1.300" /></svg>
        </button>
      </header>
      <div className="flex h-[218px] flex-col">
        {TYPES.map((t, i) => (
          <button
            key={t}
            type="button"
            className={
              i === 1
                ? "flex-1 border border-t-white border-l-white border-r-[#55524d] border-b-[#55524d] bg-[#d0ccc2] text-[8px] leading-[14px] shadow-[inset_-1px_-1px_0_#8c8880]"
                : "flex-1 border-t border-l border-b border-t-[#6c6964] border-l-[#6c6964] border-b-white bg-[#ebe9e4] text-[8px] leading-[14px]"
            }
          >
            {t}
          </button>
        ))}
      </div>
    </section>
  );
}

function AssemblyPanel() {
  return (
    <aside className="flex w-[100px] shrink-0 flex-col border-l border-[#8c8982] pt-px">
      <header className="flex h-[11px] items-center bg-[#85817c] pr-[3px] pl-[2px] text-[8px] leading-[11px] text-white">
        <span className="flex-1">装配结构</span>
        <span className="mr-[5px] h-[4px] w-[3px] border border-white" />
        <svg viewBox="0 0 8 8" className="size-[7px]"><path d={CROSS} stroke="#fff" strokeWidth="1.500" /></svg>
      </header>
      <div className="flex h-[20px] items-center border-b border-[#a5a199] pl-[2px]">
        <button type="button" aria-label="保存" className={`${raised} mr-[5px] p-px`}><Icon n="disk" className="size-[12px]" /></button>
        <button type="button" aria-label="连接" className={`${raised} p-px`}><Icon n="link" className="size-[12px]" /></button>
        <button type="button" aria-label="断开" className={`${raised} mr-[5px] p-px`}><Icon n="link2" className="size-[12px]" /></button>
        <button type="button" className="h-[14px] w-[16px] border border-[#8c8982] bg-[#ebe9e4] text-[8px] leading-[12px] font-bold">Ins</button>
        <button type="button" aria-label="轮廓" className="border border-[#8c8982] bg-[#ebe9e4]"><Icon n="outl" className="size-[12px]" /></button>
        <button type="button" aria-label="面" className="border border-[#8c8982] bg-[#ebe9e4] py-px"><Icon n="para" className="size-[10px]" /></button>
      </div>
      <div className="mr-[3px] flex flex-1 flex-col border border-[#6c6964] bg-white">
        <div className="flex-1 pt-[2px]">
          <div className="flex h-[10px] items-center gap-[9px] text-[8px] leading-[10px]">
            <Icon n="home" className="size-[11px]" />
            <span>临时作业环境</span>
          </div>
          <label className="flex h-[10px] items-center pl-[10px] text-[9px] leading-[10px] font-bold text-[#c05068]">
            <span className="mb-[4px] h-[5px] w-[10px] border-b border-l border-dotted border-[#aaa]" />
            <CheckBox />
            <Icon n="cog" className="ml-[2px] size-[11px]" />
            <span className="ml-[8px]">TOPdb</span>
          </label>
        </div>
        <div className="mx-px h-[11px] border-2 border-r-[#f4f2ee] border-b-[#f4f2ee] border-t-[#6c6964] border-l-[#6c6964] bg-[#d4d0c8]" />
      </div>
      <nav className="flex h-[18px] items-start pt-[2px]">
        {["文.", "装.", "履.", "草.", "图.", "组."].map((t, i) => (
          <button key={t} type="button" className={i === 1 ? "h-[15px] w-[15px] border-r border-b border-[#6c6964] bg-[#e2dfd9] text-[8px] leading-[13px]" : "h-[13px] w-[15px] border-r border-b border-[#6c6964] text-[8px] leading-[12px]"}>
            {t}
          </button>
        ))}
      </nav>
    </aside>
  );
}

function CheckBox() {
  return (
    <span className="relative flex size-[8px]">
      <input type="checkbox" defaultChecked className="peer size-[8px] appearance-none border border-t-[#55524d] border-l-[#55524d] border-r-[#bbb] border-b-[#bbb] bg-white" />
      <svg viewBox="0 0 8 8" className="pointer-events-none absolute inset-0 hidden peer-checked:block">
        <path d="M1.800 3.800l1.600 1.800L6.400 2.200" stroke="#000" strokeWidth="1.400" fill="none" />
      </svg>
    </span>
  );
}

function Wizard() {
  return (
    <section className="absolute top-0 right-[26px] flex w-[226px] flex-col border border-t-[#d4d0c8] border-l-[#f4f2ee] border-r-[#77736d] border-b-[#55524d] bg-[#d4d0c8] pt-px shadow-[1px_0_0_#9a8ca4]">
      <header className="flex h-[12px] items-center justify-between bg-linear-to-r from-[#0c2470] from-10% via-[#4674b8] via-55% to-[#a4c4e8] pr-px pl-[2px] text-[8px] leading-[12px] font-bold text-white">
        <span>毛坯展开向导</span>
        <Glyph d={CROSS} label="关闭向导" />
      </header>
      <div className="flex">
        <div className="flex min-w-0 flex-1 flex-col pt-[4px] pr-[2px] pb-[3px] pl-[6px]">
          <Group title="展开区域" className="mb-[6px]">
            <div className="flex gap-[16px] pt-[10px] pb-[10px] pl-[43px]">
              <Btn>参考片体</Btn>
              <Btn>重置</Btn>
            </div>
          </Group>
          <Group title="冲压方向" className="mb-[6px]">
            <div className="flex items-center justify-between pt-[4px] pr-[50px] pb-[5px] pl-[9px]">
              <label className="flex items-center gap-[4px] text-[8px]">
                <CheckBox />
                自动优化
              </label>
              <button type="button" aria-label="方向" className={`${raised} flex h-[22px] w-[25px] items-center justify-center`}>
                <Icon n="wand" />
              </button>
            </div>
          </Group>
          <Group title="分析模型" className="mb-[3px]">
            <div className="pt-[3px] pr-[9px] pb-[6px] pl-[7px]">
              <div className="flex items-end">
                <button type="button" className="h-[13px] w-[33px] border-t border-r border-l border-t-white border-l-white border-r-[#55524d] pr-[6px] text-[8px] leading-[12px]">零件</button>
                <button type="button" className="h-[11px] w-[30px] border-r border-[#55524d] pr-[8px] text-[8px] leading-[11px]">工具</button>
                <button type="button" className="h-[11px] w-[31px] border-r border-[#55524d] text-[8px] leading-[11px]">拉伸筋</button>
              </div>
              <div className="border border-t-white border-l-white border-r-[#55524d] border-b-[#55524d] pt-[4px] pr-[9px] pb-[12px] pl-[7px] shadow-[inset_-1px_-1px_0_#9a968e]">
                <Group title="网格" className="mb-[5px]">
                  <div className="flex justify-center gap-[4px] pt-px pb-[9px]">
                    {["quad", "quadY", "tub", "quadZ"].map((n) => (
                      <button key={n} type="button" aria-label={n} className={`${raised} flex h-[22px] w-[25px] items-center justify-center`}>
                        <Icon n={n} />
                      </button>
                    ))}
                  </div>
                </Group>
                <Group title="拼焊板" className="mb-[6px]">
                  <div className="flex justify-between pt-[3px] pr-[5px] pl-[8px]">
                    <div className="flex flex-col">
                      <div className={`${sunken} h-[44px] w-[100px] bg-white p-[2px] font-['Liberation_Mono',monospace]`}>
                        <button type="button" className="block bg-[#0c246c] px-px text-left text-[7px] leading-[8px] whitespace-pre text-white">Rsg1  B140  1.00mm</button>
                      </div>
                      <Btn className="mt-[4px]">材料库</Btn>
                      <label htmlFor="thickness" className="mt-[3px] ml-[12px] text-[8px] leading-[12px]">厚度</label>
                    </div>
                    <div className="flex flex-col items-end">
                      <Btn className="mt-[3px]">新建</Btn>
                      <Btn className="mt-[6px]">合并</Btn>
                      <input aria-label="材料" disabled defaultValue="B140" className={`${sunken} mt-[7px] h-[14px] w-[48px] bg-[#d4d0c8] px-px font-['Liberation_Mono',monospace] text-[8px] text-[#96928a]`} />
                      <input id="thickness" defaultValue="1.000000" className={`${sunken} mt-[3px] h-[14px] w-[48px] bg-white px-px text-right font-['Liberation_Mono',monospace] text-[8px]`} />
                    </div>
                  </div>
                </Group>
                <Group title="边界约束">
                  <div className="flex items-center justify-between pt-[5px] pr-[6px] pl-[11px] text-[8px]">
                    <span>约束类型</span>
                    <Drop label="约束类型" options={["全固定约束"]} className="w-[55px]" />
                  </div>
                  <div className="flex justify-between pt-[6px] pr-[5px] pb-[4px] pl-[8px]">
                    <div className={`${sunken} flex h-[56px] w-[100px] flex-col justify-end bg-white`}>
                      <div className="flex h-[10px] bg-[#e9e7e2]">
                        <button type="button" aria-label="向左" className={`${raised} flex w-[10px] items-center justify-center`}><span className="border-y-[3px] border-r-[3px] border-y-transparent border-r-black" /></button>
                        <span className={`${raised} w-[30px]`} />
                        <button type="button" aria-label="向右" className={`${raised} ml-auto flex w-[10px] items-center justify-center`}><span className="border-y-[3px] border-l-[3px] border-y-transparent border-l-black" /></button>
                      </div>
                    </div>
                    <div className="flex flex-col gap-[3px] pt-px">
                      <Btn>添加</Btn>
                      <Btn>编辑</Btn>
                      <Btn>删除</Btn>
                    </div>
                  </div>
                </Group>
              </div>
            </div>
          </Group>
          <Group title="求解计算">
            <div className="flex justify-between pt-px pr-[24px] pb-[7px] pl-[25px]">
              <Drop label="求解方法" options={["普通硬求解"]} className="mt-[5px] w-[77px]" />
              <div className="flex gap-[10px]">
                <button type="button" aria-label="求解" className={`${raised} flex h-[22px] w-[24px] items-center justify-center`}><Icon n="solve" /></button>
                <button type="button" aria-label="后处理" className={`${raised} flex h-[22px] w-[24px] items-center justify-center`}><Icon n="lights" /></button>
              </div>
            </div>
          </Group>
        </div>
        <div className="mr-px flex w-[10px] flex-col justify-between bg-[#e6e3dd] pt-px">
          <button type="button" aria-label="向上" className={`${raised} flex h-[10px] items-center justify-center`}><span className="border-x-[3px] border-b-[3px] border-x-transparent border-b-black" /></button>
          <button type="button" aria-label="向下" className={`${raised} flex h-[10px] items-center justify-center`}><span className="border-x-[3px] border-t-[3px] border-x-transparent border-t-black" /></button>
        </div>
      </div>
      <span role="tooltip" className="absolute right-[25px] bottom-0 border border-black bg-[#e9e7e2] px-px text-[8px] leading-[9px]">后处理</span>
    </section>
  );
}

export default function App() {
  return (
    <main className="relative flex h-screen w-full flex-col overflow-hidden border-l-2 border-[#f4f2ee] bg-[#d4d0c8] font-['Liberation_Sans','Noto_Sans_CJK_SC',sans-serif] text-black select-none">
      <header className="mt-[2px] flex h-[11px] items-center justify-between bg-linear-to-r from-[#85817c] to-[#bdb9b2] pr-px">
        <h1 className="flex items-center gap-[2px] font-['Liberation_Serif','Noto_Sans_CJK_SC',serif] text-[9px] leading-[11px] font-bold whitespace-nowrap text-[#f0eee9]">
          <Icon n="app" className="size-[12px]" />
          SINOVATION - [[1] TOPdb.main - [ C:\Users\Administrator\Desktop\测试实例NEW\stamping.cprt ]]
        </h1>
        <div className="flex gap-[2px]">
          <Glyph d="M1 6.500h5" label="最小化" />
          <Glyph d="M1 1.500h6v5H1z" label="最大化" />
          <Glyph d={CROSS} label="关闭" />
        </div>
      </header>
      <nav className="flex h-[15px] items-center justify-between border-b border-[#a5a199] pr-px text-[8px]">
        <div className="flex items-center pl-[3px]">
          <Grip />
          <Icon n="doc" className="mr-[2px] ml-[2px] size-[12px]" />
          {MENUS.map(([t, k]) => (
            <button key={t} type="button" className="w-[37px] pl-[2px] text-left leading-[12px]">
              {t}(<u>{k}</u>)
            </button>
          ))}
        </div>
        <div className="flex">
          <Glyph d="M1 6.500h5" label="最小化窗口" />
          <Glyph d="M1 3h4v4H1zM3 1.500h4v4" label="还原窗口" />
          <Glyph d={CROSS} label="关闭窗口" />
        </div>
      </nav>
      <ToolRow items={ROW1}>
        <div className="flex h-[13px] w-[24px] items-center gap-[2px]">
          <span className={`${sunken} h-[13px] flex-1 bg-white`} />
          <span className="border-x-2 border-t-2 border-x-transparent border-t-black" />
        </div>
      </ToolRow>
      <ToolRow items={ROW2}><Overflow /></ToolRow>
      <ToolRow items={ROW3}><Overflow /></ToolRow>

      <div className="flex min-h-0 flex-1">
        <ToolColumn items={COL1} />
        <ToolColumn items={COL2} />
        <AssemblyPanel />
        <div className="flex min-w-0 flex-1 flex-col border-l-2 border-[#aaa69e] pt-[3px]">
          <div className="relative flex-1 border-2 border-t-[#55444f] border-r-[#f4f2ee] border-b-[#f4f2ee] border-l-[#6c5a78] bg-linear-to-b from-[#7a3c9f] from-45% via-[#a267b7] via-72% to-[#ca92cf]">
            <Palette />
            <Model />
            <svg viewBox="0 0 30 34" className="absolute bottom-[18px] left-[26px] h-[34px] w-[30px] font-['Liberation_Serif',serif] text-[9px] font-bold" aria-hidden="true">
              <path d="M5 24V15M5 24l10 5M5 24l9-8" stroke="#333a66" fill="none" />
              <path d="M3 16l2-6 2 6-2 5z" fill="#202080" />
              <path d="M8 19l5-3 1 3-4 2z" fill="#208048" />
              <path d="M12 25l8 6-8-2z" fill="#8c2030" stroke="#8c2030" />
              <text x="6" y="7" fill="#2830c8">Z</text>
              <text x="16" y="13" fill="#4c9468">Y</text>
              <text x="20" y="30" fill="#c03048">X</text>
            </svg>
          </div>
          <div className="flex h-[18px] items-start">
            <button type="button" className="h-[16px] border-r border-b border-[#55524d] bg-[#dedbd5] px-[3px] text-[9px] leading-[14px] font-bold">[1] TOPdb.main</button>
          </div>
        </div>
        <div className="ml-[2px] flex">
          <ToolColumn items={COL3} />
        </div>
      </div>

      <div className="flex h-[17px] justify-end border-t border-[#9a968e] pt-px">
        <input aria-label="命令" className={`${sunken} h-[15px] w-[56%] bg-[#f4f4f2]`} />
      </div>
      <footer className="flex h-[13px] items-end border-t border-[#a5a199] text-[8px] leading-[10px] text-[#96928a]">
        <span className="ml-auto w-[163px] border-t border-l border-[#a5a199] pl-px">毛坯展开向导</span>
        <span className="w-[167px] border-l border-[#a5a199] pl-px whitespace-pre">X =   97.703,  Y =   10.457,  Z =   -32.215</span>
        <Icon n="table" className="mr-[12px] size-[12px]" />
      </footer>

      <Wizard />
      <p className="pointer-events-none absolute right-[19px] bottom-[22px] font-['Roboto','Noto_Sans_CJK_SC',sans-serif] text-[23px] leading-[22px] whitespace-nowrap text-white [text-shadow:1px_1px_2px_#555]">
        知乎 @Jianhongwei810
      </p>
    </main>
  );
}
